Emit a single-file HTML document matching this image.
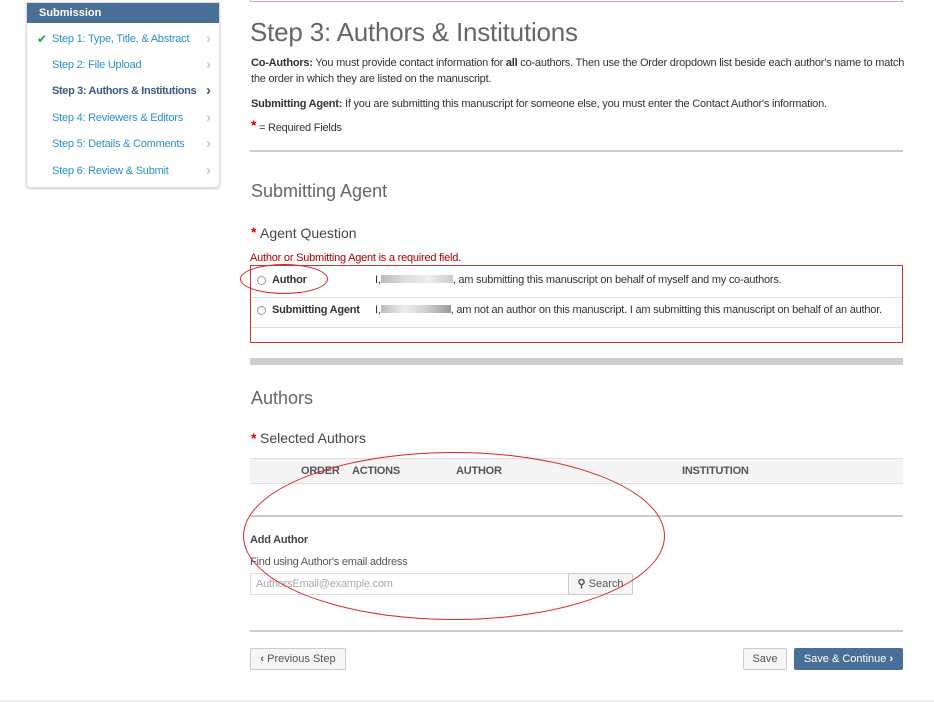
<!DOCTYPE html>
<html><head><meta charset="utf-8"><style>
*{margin:0;padding:0;box-sizing:border-box}
body{width:934px;height:702px;background:#fff;font-family:"Liberation Sans",Arial,sans-serif;color:#333;position:relative;overflow:hidden;font-size:11px}
.a{position:absolute;white-space:nowrap}
.n{letter-spacing:-0.22px}
.side{position:absolute;left:26px;top:2px;width:194px;height:186px;border:1px solid #ddd;border-radius:0 0 4px 4px;box-shadow:0 1px 2px #ccc}
.side .hd{background:#4a6f97;color:#fff;font-weight:bold;height:20px;line-height:20px;padding-left:12px;font-size:11px}
.step{position:absolute;left:25px;color:#2a8fc7;font-size:11px}
.chev{position:absolute;left:179px;color:#aad4ea;font-size:15px;font-weight:bold;line-height:14px}
.hr{position:absolute;left:250px;width:653px;height:2px;background:#ccc}
.btn{position:absolute;border:1px solid #ccc;background:#f5f5f5;border-radius:2px;color:#555;font-size:11px;text-align:center}
</style></head><body>
<div class="a" style="left:250px;top:-1px;width:653px;height:3px;border:1px solid #d9a9a9;border-top:none"></div>
<div class="side"><div class="hd">Submission</div>
<div class="a" style="left:10px;top:29px;color:#2a9d2a;font-size:12px">✔</div>
<div class="step n" style="top:30px">Step 1: Type, Title, &amp; Abstract</div><div class="chev" style="top:29px">›</div>
<div class="step n" style="top:56px">Step 2: File Upload</div><div class="chev" style="top:55px">›</div>
<div class="step n" style="top:82px;color:#3d5a80;font-weight:bold;letter-spacing:-0.35px">Step 3: Authors &amp; Institutions</div><div class="chev" style="top:81px;color:#3d5a80">›</div>
<div class="step n" style="top:109px">Step 4: Reviewers &amp; Editors</div><div class="chev" style="top:108px">›</div>
<div class="step n" style="top:135px">Step 5: Details &amp; Comments</div><div class="chev" style="top:134px">›</div>
<div class="step n" style="top:162px">Step 6: Review &amp; Submit</div><div class="chev" style="top:161px">›</div>
</div>
<div class="a" style="left:250px;top:17px;font-size:26px;color:#666;letter-spacing:-0.2px">Step 3: Authors &amp; Institutions</div>
<div class="a n" style="left:251px;top:55px;font-size:11px;line-height:16px;white-space:normal;width:660px"><b>Co-Authors:</b> You must provide contact information for <b>all</b> co-authors. Then use the Order dropdown list beside each author's name to match the order in which they are listed on the manuscript.</div>
<div class="a n" style="left:251px;top:98px;font-size:11px"><b>Submitting Agent:</b> If you are submitting this manuscript for someone else, you must enter the Contact Author's information.</div>
<div class="a" style="left:251px;top:117px;color:#d00;font-size:14px;font-weight:bold">*</div>
<div class="a n" style="left:259px;top:122px;font-size:11px">= Required Fields</div>
<div class="hr" style="top:150px"></div>
<div class="a" style="left:251px;top:181px;font-size:18px;color:#666">Submitting Agent</div>
<div class="a" style="left:251px;top:224px;color:#d00;font-size:14px;font-weight:bold">*</div>
<div class="a" style="left:260px;top:225px;font-size:14px;color:#444">Agent Question</div>
<div class="a n" style="left:250px;top:252px;font-size:11px;color:#a00">Author or Submitting Agent is a required field.</div>
<div class="a" style="left:250px;top:265px;width:653px;height:78px;border:1px solid #c33"></div>
<div class="a" style="left:251px;top:297px;width:651px;height:1px;background:#ddd"></div>
<div class="a" style="left:251px;top:327px;width:651px;height:1px;background:#ddd"></div>
<div class="a" style="left:257px;top:276px;width:9px;height:9px;border:1px solid #999;border-radius:50%"></div>
<div class="a" style="left:257px;top:306px;width:9px;height:9px;border:1px solid #999;border-radius:50%"></div>
<div class="a n" style="left:272px;top:274px;font-weight:bold;font-size:11px">Author</div>
<div class="a n" style="left:272px;top:304px;font-weight:bold;font-size:11px">Submitting Agent</div>
<div class="a n" style="left:375px;top:274px;font-size:11px">I,<span style="display:inline-block;width:72px;height:8px;background:linear-gradient(90deg,#bbb,#ddd,#eee,#ccc)"></span>, am submitting this manuscript on behalf of myself and my co-authors.</div>
<div class="a n" style="left:375px;top:304px;font-size:11px">I,<span style="display:inline-block;width:70px;height:8px;background:linear-gradient(90deg,#bbb,#eee,#ccc,#999)"></span>, am not an author on this manuscript. I am submitting this manuscript on behalf of an author.</div>
<div class="a" style="left:240px;top:264px;width:88px;height:30px;border:1.5px solid #d22;border-radius:50%"></div>
<div class="a" style="left:250px;top:358px;width:653px;height:7px;background:#ccc"></div>
<div class="a" style="left:251px;top:388px;font-size:18px;color:#666">Authors</div>
<div class="a" style="left:251px;top:430px;color:#d00;font-size:14px;font-weight:bold">*</div>
<div class="a" style="left:260px;top:430px;font-size:14px;color:#444">Selected Authors</div>
<div class="a" style="left:250px;top:458px;width:653px;height:26px;background:#f4f4f4;border-top:1px solid #e0e0e0;border-bottom:1px solid #e0e0e0"></div>
<div class="a n" style="left:301px;top:465px;font-weight:bold;font-size:11px;color:#555">ORDER</div>
<div class="a n" style="left:352px;top:465px;font-weight:bold;font-size:11px;color:#555">ACTIONS</div>
<div class="a n" style="left:456px;top:465px;font-weight:bold;font-size:11px;color:#555">AUTHOR</div>
<div class="a n" style="left:682px;top:465px;font-weight:bold;font-size:11px;color:#555">INSTITUTION</div>
<div class="hr" style="top:515px"></div>
<div class="a n" style="left:250px;top:534px;font-weight:bold;font-size:11px;color:#444">Add Author</div>
<div class="a n" style="left:250px;top:556px;font-size:11px;color:#555">Find using Author's email address</div>
<div class="a" style="left:250px;top:573px;width:319px;height:22px;border:1px solid #ddd"></div>
<div class="a n" style="left:256px;top:578px;font-size:11px;color:#aaa">AuthorsEmail@example.com</div>
<div class="btn" style="left:568px;top:573px;width:65px;height:22px;line-height:20px"><b>&#9906;</b> Search</div>
<div class="a" style="left:243px;top:452px;width:422px;height:168px;border:1.5px solid #d22;border-radius:50%"></div>
<div class="hr" style="top:630px"></div>
<div class="btn" style="left:250px;top:648px;width:96px;height:22px;line-height:20px"><b>‹</b> Previous Step</div>
<div class="btn" style="left:743px;top:648px;width:44px;height:22px;line-height:20px">Save</div>
<div class="btn" style="left:794px;top:648px;width:109px;height:22px;line-height:20px;background:#4a6f97;border-color:#4a6f97;color:#fff">Save &amp; Continue <b>›</b></div>
<div class="a" style="left:0;top:700px;width:934px;height:2px;background:#eee"></div>
</body></html>
